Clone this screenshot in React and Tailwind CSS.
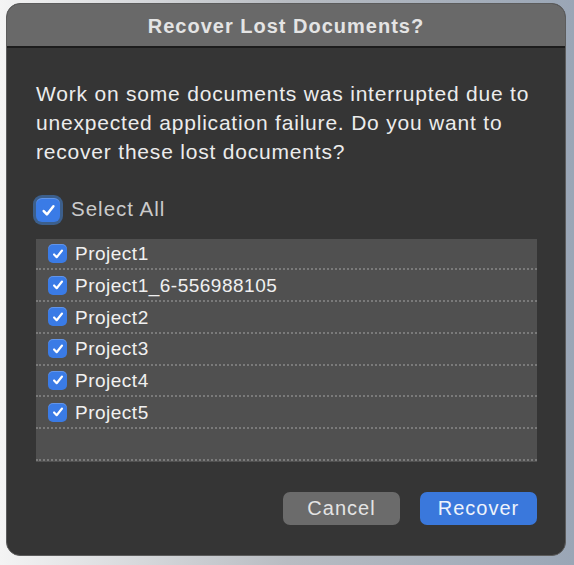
import { useState } from "react";

const projects = ["Project1", "Project1_6-556988105", "Project2", "Project3", "Project4", "Project5"];

function Check({ big = false }) {
    const box = big ? "w-[24px] h-[24px] rounded-[6px]" : "w-[19px] h-[19px] rounded-[5px]";
    return (
        <span className={`${box} flex items-center justify-center bg-[#3a7be6] shadow-[inset_0_1px_0_rgba(255,255,255,0.2)]`}>
            <svg viewBox="0 0 16 16" className={big ? "w-[17px] h-[17px]" : "w-[14px] h-[14px]"} fill="none">
                <path d="M3.5 8.5l3 3.2L12.6 4" stroke="white" strokeWidth="2.4" strokeLinecap="round" strokeLinejoin="round" />
            </svg>
        </span>
    );
}

export default function App() {
    const [checked] = useState(projects.map(() => true));

    return (
        <div
            className="w-[574px] h-[565px] bg-gradient-to-r from-[#f4f4f4] via-[#b8bcc2] to-[#9aa6b6] pl-[6px] pt-[3px] overflow-hidden"
            style={{ fontFamily: "'Liberation Sans', Arial, sans-serif" }}
        >
            <div className="w-[560px] h-[553px] rounded-[14px] bg-[#353535] border border-[#5c5c5c] overflow-hidden flex flex-col">
                <div className="h-[44px] bg-[#696969] border-b-2 border-[#1c1c1c] flex items-center justify-center">
                    <span className="text-[20px] font-bold text-[#e4e4e4] tracking-[1px] mt-[1px]">Recover Lost Documents?</span>
                </div>

                <div className="flex-1 flex flex-col pl-[29px] pr-[22px] pt-[31px]">
                    <p className="text-[21px] leading-[29px] tracking-[0.8px] text-[#ececec]">
                        Work on some documents was interrupted due to unexpected application failure. Do you want to recover these lost documents?
                    </p>

                    <div className="mt-[28px] flex items-center gap-[8px] ml-[-3px]">
                        <span className="p-[3px] rounded-[9px] bg-[#3c5f8c]">
                            <Check big />
                        </span>
                        <span className="text-[20.5px] tracking-[1px] text-[#cbcbcb] mb-[2px]">Select All</span>
                    </div>

                    <div className="mt-[12px] w-[501px] h-[223px] bg-[#505050]">
                        {projects.map((p, i) => (
                            <div
                                key={p}
                                className="h-[31.7px] flex items-center gap-[8px] pl-[12px] border-b-2 border-dotted border-[#7a7a7a]"
                            >
                                {checked[i] && <Check />}
                                <span className="text-[19px] tracking-[0.5px] text-[#f0f0f0] mt-[2px]">{p}</span>
                            </div>
                        ))}
                        <div className="h-[31.7px] border-b-2 border-dotted border-[#7a7a7a]" />
                    </div>

                    <div className="mt-[30px] flex justify-end gap-[20px] pr-[6px]">
                        <button className="w-[117px] h-[33px] rounded-[7px] bg-[#6b6b6b] text-[20px] tracking-[1px] text-[#e4e4e4]">Cancel</button>
                        <button className="w-[117px] h-[33px] rounded-[7px] bg-[#3a78dc] text-[20px] tracking-[1px] text-[#eef3fb]">Recover</button>
                    </div>
                </div>
            </div>
        </div>
    );
}
